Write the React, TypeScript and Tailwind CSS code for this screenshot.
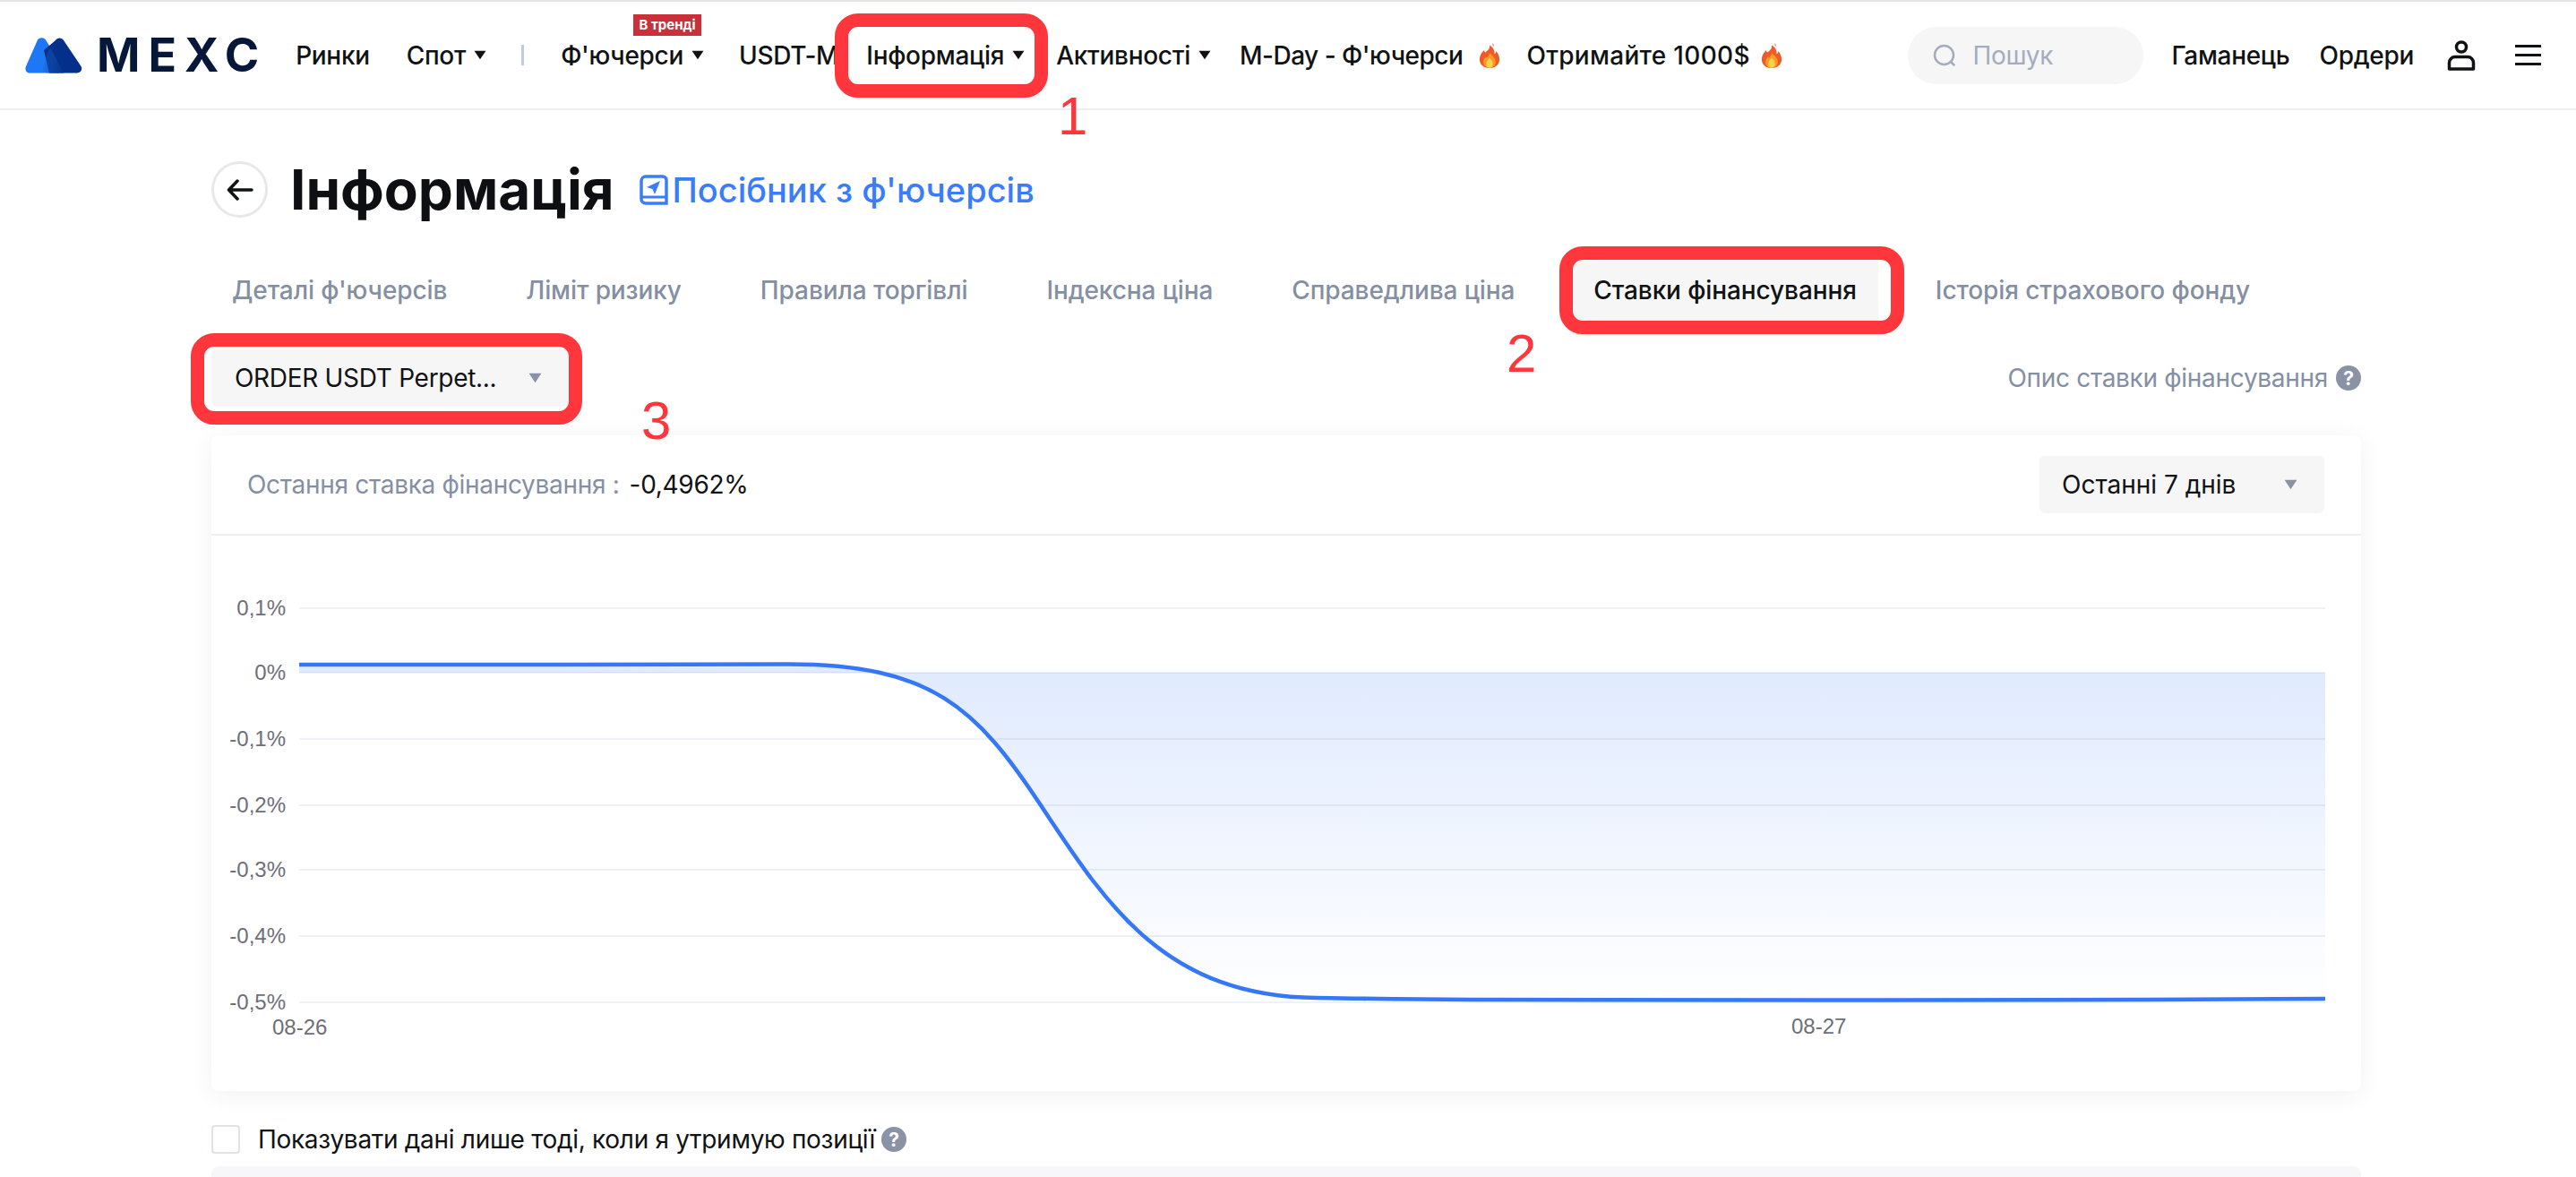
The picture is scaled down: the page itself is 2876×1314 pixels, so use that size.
import React from 'react';

const Arrow = ({ c = '#111111', w = 14, h = 11 }: { c?: string; w?: number; h?: number }) => (
  <svg width={w} height={h} viewBox="0 0 13 10" className="shrink-0"><path d="M0.5 0.5H12.5L6.5 9.5Z" fill={c} /></svg>
);

const Flame = () => (
  <svg width="24" height="30" viewBox="0 0 26 31" className="shrink-0">
    <path d="M13 3c1 5-3 6-5 9-1-1-1.500-2-1.500-3C3 12 1 16 1 20c0 6.500 5 10.500 12 10.500S25 26.500 25 20c0-4-2-8-4-10 0 2-1 3-2 3.500C19.500 9 17 5 13 3Z" fill="#ef5a26" />
    <path d="M17 0.500c1 1 1.500 2.500 1 4-1-1-1.800-2-1-4Z" fill="#f2735a" />
    <path d="M13 12c.5 3-2 4-3.500 6.500-.6-.5-.9-1-1-1.500C6.500 19 5.500 21 5.500 23c0 4.500 3.500 7.500 7.500 7.500s7.500-3 7.500-7.500c0-4-4-7-7.500-11Z" fill="#f99a26" />
    <path d="M13 18c-2 3-4 4.500-4 7.500 0 3 2 5 4 5s4-2 4-5c0-3-2-5-4-7.500Z" fill="#fbd24c" />
  </svg>
);

const Help = () => (
  <span className="flex h-[28px] w-[28px] shrink-0 items-center justify-center rounded-full bg-[#8a93a6] text-[21px] font-bold leading-none text-white">?</span>
);

const Nav = ({ t, arrow, className = '' }: { t: string; arrow?: boolean; className?: string }) => (
  <div className={`flex shrink-0 items-center gap-[9px] whitespace-nowrap ${className}`}>
    <span>{t}</span>
    {arrow && <Arrow />}
  </div>
);

const RedBox = ({ className }: { className: string }) => (
  <div className={`absolute rounded-[26px] border-[15px] border-[#ff363c] ${className}`} />
);

const line =
  'M334 742L620 742L880 741.500C1040 741.500 1090 790 1162 899C1234 1008 1300 1113 1470 1114C1520 1114.500 1560 1116 1640 1116L2100 1116.500L2400 1116L2596 1115';
const grid: [number, string][] = [
  [679, '0,1%'], [751, '0%'], [825, '-0,1%'], [899, '-0,2%'], [971, '-0,3%'], [1045, '-0,4%'], [1119, '-0,5%'],
];
const tabs = ['Деталі ф\'ючерсів', 'Ліміт ризику', 'Правила торгівлі', 'Індексна ціна', 'Справедлива ціна'];

export default function App() {
  return (
    <div className="relative h-[1314px] w-[2876px] overflow-hidden bg-white font-['Inter','Noto_Sans',sans-serif] text-[28px] font-medium tracking-[-0.3px] text-[#111214]">
      <header className="flex h-[123px] items-center border-t-2 border-b-2 border-t-[#e5e5e5] border-b-[#eeeef2] pl-[28px]">
        <svg width="64" height="40" viewBox="0 0 64 40" className="shrink-0">
          <defs>
            <linearGradient id="lg" x1="0" y1="0" x2="1" y2="0"><stop offset="0" stopColor="#1c64c8" stopOpacity="0.3" /><stop offset="1" stopColor="#04308c" /></linearGradient>
          </defs>
          <path d="M14 2.500C16 -0.500 21 -0.500 23 2.500L34 20 L40 37 A3 3 0 0 1 37 39.500H5C1 39.500 -0.500 35 1 32Z" fill="#1e78f5" />
          <path d="M34 3C36 -0.500 41 -0.500 43 3L62.500 32C64.500 35.500 62 39.500 58 39.500H27L21 14Z" fill="#04308c" />
          <path d="M28 11L43 39.500H25C21 39.500 19 36 20.500 32L24 19Z" fill="url(#lg)" />
        </svg>
        <span className="ml-[16px] shrink-0 text-[52px] font-bold leading-none tracking-[9px] text-[#06173a]">MEXC</span>
        <nav className="ml-[32px] flex items-center">
          <Nav t="Ринки" />
          <Nav t="Спот" arrow className="ml-[41px]" />
          <div className="ml-[39px] h-[23px] w-[3px] bg-[#c3cad8]" />
          <div className="relative ml-[41px]">
            <Nav t="Ф'ючерси" arrow />
            <span className="absolute left-[81px] top-[-25px] flex h-[24px] w-[76px] items-center justify-center whitespace-nowrap bg-[#c9303a] text-[15px] font-bold leading-none tracking-normal text-white">В тренді</span>
          </div>
          <Nav t="USDT-M" className="ml-[39px]" />
          <Nav t="Інформація" arrow className="ml-[31px]" />
          <Nav t="Активності" arrow className="ml-[35px]" />
          <Nav t="M-Day - Ф'ючерси" className="ml-[32px] tracking-[-0.5px]" />
          <div className="ml-[18px]"><Flame /></div>
          <Nav t="Отримайте 1000$" className="ml-[29px] tracking-[0.3px]" />
          <div className="ml-[12px]"><Flame /></div>
        </nav>
        <div className="ml-auto flex items-center pr-[39px]">
          <div className="flex h-[64px] w-[263px] items-center rounded-[32px] bg-[#f6f6f7] pl-[28px] font-normal text-[#a4adbd]">
            <svg width="26" height="26" viewBox="0 0 26 26" fill="none" stroke="#a4adbd" strokeWidth="2.500" strokeLinecap="round"><circle cx="12.500" cy="12.500" r="10.500" /><path d="M20 20l3.500 3.500" /></svg>
            <span className="ml-[18px]">Пошук</span>
          </div>
          <span className="ml-[31px]">Гаманець</span>
          <span className="ml-[33px]">Ордери</span>
          <svg width="32" height="34" viewBox="0 0 32 34" fill="none" stroke="#111214" strokeWidth="3.500" className="ml-[37px]">
            <circle cx="16" cy="7.500" r="5.500" />
            <path d="M9 18.500H23A6.500 6.500 0 0 1 29.500 25V32H2.500V25A6.500 6.500 0 0 1 9 18.500Z" strokeLinejoin="round" />
          </svg>
          <div className="ml-[44px] flex w-[29px] flex-col gap-[7px]">
            <div className="h-[3px] bg-[#111214]" />
            <div className="h-[3px] bg-[#111214]" />
            <div className="h-[3px] bg-[#111214]" />
          </div>
        </div>
      </header>

      <main className="ml-[236px] w-[2400px]">
        <div className="mt-[57px] flex h-[63px] items-center tracking-normal">
          <div className="flex h-[63px] w-[63px] items-center justify-center rounded-full border-[3px] border-[#e8e8e8]">
            <svg width="30" height="26" viewBox="0 0 30 26" fill="none" stroke="#111214" strokeWidth="3.500" strokeLinecap="round" strokeLinejoin="round"><path d="M28 13H3M12 3L2.500 13L12 23" /></svg>
          </div>
          <h1 className="ml-[25px] text-[62px] font-bold leading-none text-[#0d0f12]">Інформація</h1>
          <svg width="32" height="34" viewBox="0 0 32 34" fill="none" className="ml-[28px]">
            <path d="M7 2H26A4 4 0 0 1 30 6V32H7A5 5 0 0 1 2 27V7A5 5 0 0 1 7 2Z" stroke="#3b7df8" strokeWidth="3.500" />
            <path d="M3 25H30" stroke="#3b7df8" strokeWidth="3" />
            <path d="M23 7L8 14L14.500 16L17 22Z" fill="#3b7df8" />
          </svg>
          <a className="ml-[5px] text-[38px] font-medium leading-none text-[#3b7df8]">Посібник з ф'ючерсів</a>
        </div>

        <div className="mt-[47px] -ml-px flex h-[68px] items-center tracking-[-0.1px] text-[#858fa3]">
          {tabs.map((t) => (
            <div key={t} className="mr-[40px] whitespace-nowrap px-[24px]">{t}</div>
          ))}
          <div className="mr-[40px] flex h-[68px] items-center whitespace-nowrap bg-[#f6f6f7] px-[24px] text-[#111214]">Ставки фінансування</div>
          <div className="whitespace-nowrap px-[24px]">Історія страхового фонду</div>
        </div>

        <div className="mt-[32px] flex h-[64px] items-center justify-between">
          <div className="flex h-[64px] w-[399px] items-center justify-between rounded-[6px] bg-[#f6f6f7] pl-[26px] pr-[30px] font-normal">
            <span>ORDER USDT Perpet...</span>
            <Arrow c="#8a93a6" w={15} h={12} />
          </div>
          <div className="flex items-center gap-[9px] font-normal text-[#858fa3]">
            <span>Опис ставки фінансування</span>
            <Help />
          </div>
        </div>

        <section className="mt-[32px] h-[732px] rounded-[8px] bg-white shadow-[0_4px_28px_rgba(0,0,0,0.06)]">
          <div className="flex h-[112px] items-center justify-between border-b-2 border-[#eeeef2] pl-[40px] pr-[41px]">
            <div className="flex items-center font-normal">
              <span className="text-[#858fa3]">Остання ставка фінансування :</span>
              <span className="ml-[11px] text-[#111214]">-0,4962%</span>
            </div>
            <div className="flex h-[64px] w-[318px] items-center justify-between rounded-[6px] bg-[#f6f6f7] pl-[25px] pr-[30px] font-normal">
              <span className="tracking-normal">Останні 7 днів</span>
              <Arrow c="#8a93a6" w={15} h={12} />
            </div>
          </div>
          <svg width="2400" height="620" viewBox="236 598 2400 620" className="block tracking-normal">
            <defs>
              <linearGradient id="area" gradientUnits="userSpaceOnUse" x1="0" y1="751" x2="0" y2="1119">
                <stop offset="0" stopColor="#3577f8" stopOpacity="0.15" />
                <stop offset="1" stopColor="#3577f8" stopOpacity="0" />
              </linearGradient>
            </defs>
            {grid.map(([y, l]) => (
              <g key={l}>
                <line x1="334" x2="2596" y1={y} y2={y} stroke="#eef1f5" strokeWidth="2" />
                <text x="319" y={y + 8} textAnchor="end" fontSize="24" fontFamily="'Liberation Sans',sans-serif" fontWeight="400" fill="#6e6e78">{l}</text>
              </g>
            ))}
            <path d={`${line}L2596 751L334 751Z`} fill="url(#area)" />
            <path d={line} fill="none" stroke="#3577f8" strokeWidth="4.500" />
            <text x="304" y="1155" fontSize="24" fontFamily="'Liberation Sans',sans-serif" fontWeight="400" fill="#6e6e78">08-26</text>
            <text x="2000" y="1154" fontSize="24" fontFamily="'Liberation Sans',sans-serif" fontWeight="400" fill="#6e6e78">08-27</text>
          </svg>
        </section>

        <div className="mt-[38px] flex h-[32px] items-center font-normal">
          <div className="h-[32px] w-[32px] rounded-[4px] border-2 border-[#dfe2e8]" />
          <span className="ml-[20px]">Показувати дані лише тоді, коли я утримую позиції</span>
          <span className="ml-[7px]"><Help /></span>
        </div>
        <div className="mt-[14px] h-[40px] rounded-t-[8px] bg-[#f7f7f9]" />
      </main>

      <RedBox className="left-[932px] top-[15px] h-[94px] w-[238px]" />
      <RedBox className="left-[1741px] top-[275px] h-[98px] w-[385px]" />
      <RedBox className="left-[213px] top-[372px] h-[102px] w-[437px]" />
      <span className="absolute left-[1181px] top-[100px] font-['Liberation_Sans',sans-serif] text-[60px] font-normal leading-none tracking-normal text-[#ff363c]">1</span>
      <span className="absolute left-[1682px] top-[365px] font-['Liberation_Sans',sans-serif] text-[60px] font-normal leading-none tracking-normal text-[#ff363c]">2</span>
      <span className="absolute left-[716px] top-[440px] font-['Liberation_Sans',sans-serif] text-[60px] font-normal leading-none tracking-normal text-[#ff363c]">3</span>
    </div>
  );
}
